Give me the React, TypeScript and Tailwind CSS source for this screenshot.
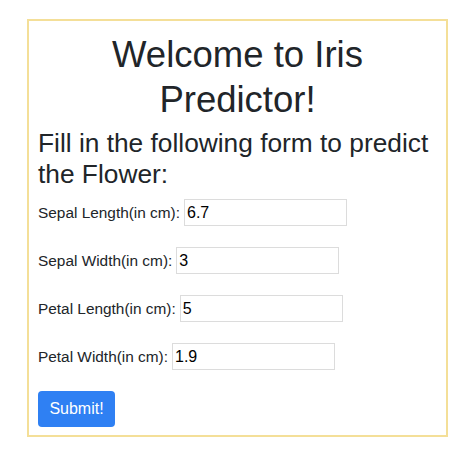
import { useState } from "react";

const fields = [
	{ name: "sepal_length", label: "Sepal Length(in cm):", value: "6.7" },
	{ name: "sepal_width", label: "Sepal Width(in cm):", value: "3" },
	{ name: "petal_length", label: "Petal Length(in cm):", value: "5" },
	{ name: "petal_width", label: "Petal Width(in cm):", value: "1.9" },
];

export default function App() {
	const [values, setValues] = useState<Record<string, string>>(
		Object.fromEntries(fields.map((f) => [f.name, f.value]))
	);

	return (
		<div className="min-h-screen bg-white pt-[19px] pl-[27px] font-['Liberation_Sans',Arial,sans-serif] text-[#212529]">
			<div className="w-[421px] border-2 border-[#f4df98] px-[9px] pt-[11px] pb-[8px]">
				<h1 className="text-center text-[36.5px] leading-[45px] font-normal">
					Welcome to Iris
					<br />
					Predictor!
				</h1>
				<h2 className="mt-[6px] text-[26.3px] leading-[31px] font-normal">
					Fill in the following form to predict the Flower:
				</h2>

				<form
					className="mt-[9px] flex flex-col gap-[21px]"
					onSubmit={(e) => e.preventDefault()}
				>
					{fields.map((f) => (
						<div key={f.name} className="flex items-center h-[27px] gap-[4px]">
							<label htmlFor={f.name} className="text-[15.4px] leading-none">
								{f.label}
							</label>
							<input
								id={f.name}
								type="text"
								value={values[f.name]}
								onChange={(e) =>
									setValues({ ...values, [f.name]: e.target.value })
								}
								className="w-[163px] h-[27px] border border-[#dcdcdc] px-[2px] text-[16px] text-black outline-none"
							/>
						</div>
					))}

					<button
						type="submit"
						className="w-[77px] h-[36px] rounded-[4px] bg-[#2f80f3] text-white text-[16px]"
					>
						Submit!
					</button>
				</form>
			</div>
		</div>
	);
}
